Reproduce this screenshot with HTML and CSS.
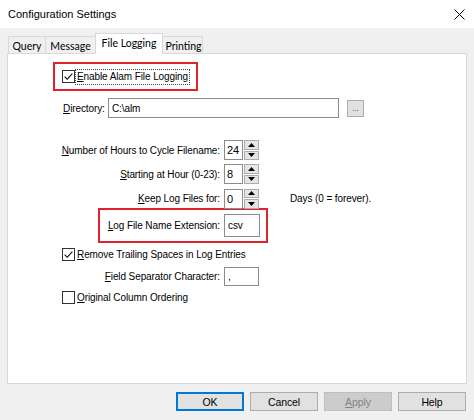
FILE: index.html
```html
<!DOCTYPE html>
<html>
<head>
<meta charset="utf-8">
<link rel="stylesheet" href="styles.css">
</head>
<body>
<div class="titlebar">
  <span class="title">Configuration Settings</span>
  <svg class="close" width="11" height="11" viewBox="0 0 11 11"><path d="M0.5 0.5 L10.5 10.5 M10.5 0.5 L0.5 10.5" stroke="#000" stroke-width="1"/></svg>
</div>
<div class="tabs">
  <div class="tab t-query">Query</div>
  <div class="tab t-msg">Message</div>
  <div class="tab t-file active">File Logging</div>
  <div class="tab t-print">Printing</div>
</div>
<div class="panel">
  <div class="hl hl-enable">
    <svg class="cb" width="13" height="13" viewBox="0 0 13 13"><rect x="0.5" y="0.5" width="12" height="12" fill="#fff" stroke="#333"/><path d="M2.6 6.6 L5.2 9.2 L10.4 3.6" fill="none" stroke="#111" stroke-width="1.1"/></svg>
    <span class="focus"><u>E</u>nable Alam File Logging</span>
  </div>
  <div class="row dir">
    <span class="dir-lbl"><u>D</u>irectory:</span>
    <div class="edit dir-edit">C:\alm</div>
    <div class="browse">...</div>
  </div>
  <div class="row field f-hours">
    <span class="lbl"><u>N</u>umber of Hours to Cycle Filename:</span>
    <div class="spin">
      <div class="edit val">24</div>
      <div class="btns">
        <div class="sb"><svg width="7" height="4" viewBox="0 0 7 4"><path d="M0 4 L3.5 0 L7 4 Z" fill="#000"/></svg></div>
        <div class="sb"><svg width="7" height="4" viewBox="0 0 7 4"><path d="M0 0 L3.5 4 L7 0 Z" fill="#000"/></svg></div>
      </div>
    </div>
  </div>
  <div class="row field f-start">
    <span class="lbl"><u>S</u>tarting at Hour (0-23):</span>
    <div class="spin">
      <div class="edit val">8</div>
      <div class="btns">
        <div class="sb"><svg width="7" height="4" viewBox="0 0 7 4"><path d="M0 4 L3.5 0 L7 4 Z" fill="#000"/></svg></div>
        <div class="sb"><svg width="7" height="4" viewBox="0 0 7 4"><path d="M0 0 L3.5 4 L7 0 Z" fill="#000"/></svg></div>
      </div>
    </div>
  </div>
  <div class="row field f-keep">
    <span class="lbl"><u>K</u>eep Log Files for:</span>
    <div class="spin">
      <div class="edit val">0</div>
      <div class="btns">
        <div class="sb"><svg width="7" height="4" viewBox="0 0 7 4"><path d="M0 4 L3.5 0 L7 4 Z" fill="#000"/></svg></div>
        <div class="sb"><svg width="7" height="4" viewBox="0 0 7 4"><path d="M0 0 L3.5 4 L7 0 Z" fill="#000"/></svg></div>
      </div>
    </div>
    <span class="days">Days (0 = forever).</span>
  </div>
  <div class="hl hl-ext">
    <span class="ext-lbl"><u>L</u>og File Name Extension:</span>
    <div class="edit ext-edit">csv</div>
  </div>
  <div class="row chk f-remove">
    <svg class="cb" width="13" height="13" viewBox="0 0 13 13"><rect x="0.5" y="0.5" width="12" height="12" fill="#fff" stroke="#333"/><path d="M2.6 6.6 L5.2 9.2 L10.4 3.6" fill="none" stroke="#111" stroke-width="1.1"/></svg>
    <span class="chk-txt"><u>R</u>emove Trailing Spaces in Log Entries</span>
  </div>
  <div class="row field f-sep">
    <span class="lbl"><u>F</u>ield Separator Character:</span>
    <div class="edit sep-edit">,</div>
  </div>
  <div class="row chk f-orig">
    <svg class="cb" width="13" height="13" viewBox="0 0 13 13"><rect x="0.5" y="0.5" width="12" height="12" fill="#fff" stroke="#333"/></svg>
    <span class="chk-txt"><u>O</u>riginal Column Ordering</span>
  </div>
</div>
<div class="buttons">
  <div class="btn default">OK</div>
  <div class="btn">Cancel</div>
  <div class="btn disabled"><u>A</u>pply</div>
  <div class="btn">Help</div>
</div>
</body>
</html>
```
FILE: styles.css
```css
html, body {
  margin: 0;
  padding: 0;
}
body {
  width: 474px;
  height: 420px;
  overflow: hidden;
  background: #f0f0f0;
  font-family: "Liberation Sans", Arial, sans-serif;
  font-size: 10px;
  letter-spacing: -0.1px;
  color: #000;
  white-space: nowrap;
}
u {
  text-decoration: underline;
  text-underline-offset: 1px;
}
.titlebar {
  height: 28px;
  background: #fff;
  display: flex;
  align-items: center;
  justify-content: space-between;
  padding: 0 9px 0 8px;
}
.title {
  font-family: "Liberation Sans", Arial, sans-serif;
  font-size: 11px;
  letter-spacing: 0;
  color: #000;
}
.close {
  display: block;
}
.tabs {
  height: 25px;
  padding-left: 8px;
  display: flex;
  align-items: flex-end;
}
.tab {
  box-sizing: border-box;
  height: 17px;
  border: 1px solid #d9d9d9;
  border-bottom: none;
  background: #f0f0f0;
  display: flex;
  align-items: center;
  justify-content: center;
  font-family: "Lato", "Liberation Sans", sans-serif;
  font-size: 10.5px;
  letter-spacing: 0;
  padding-top: 1px;
}
.t-query { width: 38px; }
.t-msg { width: 51px; margin-left: -1px; }
.t-file { width: 68px; }
.t-print { width: 41px; padding-left: 2px; }
.tab.active {
  height: 21px;
  background: #fff;
  margin-left: -1px;
  margin-right: -1px;
  margin-bottom: -1px;
  position: relative;
  z-index: 1;
  padding-top: 0;
  padding-bottom: 2px;
}
.panel {
  box-sizing: border-box;
  margin: 0 7px;
  width: 460px;
  height: 331px;
  border: 1px solid #d9d9d9;
  background: #fff;
}
.hl {
  box-sizing: border-box;
  border: 2px solid #e0232b;
  display: flex;
  align-items: center;
}
.cb {
  display: block;
  flex: none;
}
.hl-enable {
  margin: 8px 0 0 45px;
  width: 145px;
  height: 29px;
  padding-left: 7px;
}
.focus {
  margin-left: 1px;
  padding: 1px 1px 1px 1px;
  outline: 1px dotted #444;
  line-height: 12px;
}
.row {
  display: flex;
  align-items: center;
}
.edit {
  box-sizing: border-box;
  border: 1px solid #8c8c8c;
  background: #fff;
  padding-left: 3px;
  display: flex;
  align-items: center;
}
.dir {
  margin-top: 7px;
  height: 20px;
  padding-left: 55px;
}
.dir-lbl {
  width: 45px;
}
.dir-edit {
  width: 231px;
  height: 20px;
}
.browse {
  box-sizing: border-box;
  width: 17px;
  height: 17px;
  margin-left: 8px;
  border: 1px solid #adadad;
  background: #e1e1e1;
  font-size: 8px;
  color: #333;
  display: flex;
  align-items: flex-end;
  justify-content: center;
  padding-bottom: 3px;
  letter-spacing: 0;
}
.field .lbl {
  box-sizing: border-box;
  width: 216px;
  padding-right: 4px;
  text-align: right;
}
.f-hours {
  margin-top: 22px;
  height: 20px;
}
.f-start {
  margin-top: 4px;
  height: 20px;
}
.f-keep {
  margin-top: 5px;
  height: 19px;
}
.spin {
  display: flex;
  height: 20px;
  width: 35px;
}
.spin .val {
  width: 19px;
  height: 100%;
  padding-left: 2px;
  font-size: 11px;
}
.btns {
  width: 15px;
  margin-left: 1px;
  display: flex;
  flex-direction: column;
  gap: 1px;
}
.sb {
  box-sizing: border-box;
  flex: 1;
  border: 1px solid #adadad;
  background: #e5e5e5;
  display: flex;
  align-items: center;
  justify-content: center;
}
.sb svg {
  display: block;
}
.days {
  margin-left: 31px;
}
.hl-ext {
  margin-left: 90px;
  width: 170px;
  height: 35px;
}
.ext-lbl {
  box-sizing: border-box;
  width: 124px;
  padding-right: 4px;
  text-align: right;
}
.ext-edit {
  width: 36px;
  height: 23px;
}
.chk {
  padding-left: 54px;
  height: 13px;
}
.chk-txt {
  margin-left: 2px;
}
.f-remove {
  margin-top: 5px;
}
.f-sep {
  margin-top: 6px;
  height: 19px;
}
.sep-edit {
  width: 35px;
  height: 19px;
}
.f-orig {
  margin-top: 5px;
}
.buttons {
  display: flex;
  justify-content: flex-end;
  gap: 6px;
  padding-right: 8px;
  margin-top: 8px;
}
.btn {
  box-sizing: border-box;
  width: 68px;
  height: 19px;
  border: 1px solid #adadad;
  background: #e1e1e1;
  display: flex;
  align-items: center;
  justify-content: center;
  font-size: 10.5px;
}
.btn.default {
  border: 2px solid #0078d7;
}
.btn.disabled {
  background: #cccccc;
  border-color: #bfbfbf;
  color: #838383;
}
```
